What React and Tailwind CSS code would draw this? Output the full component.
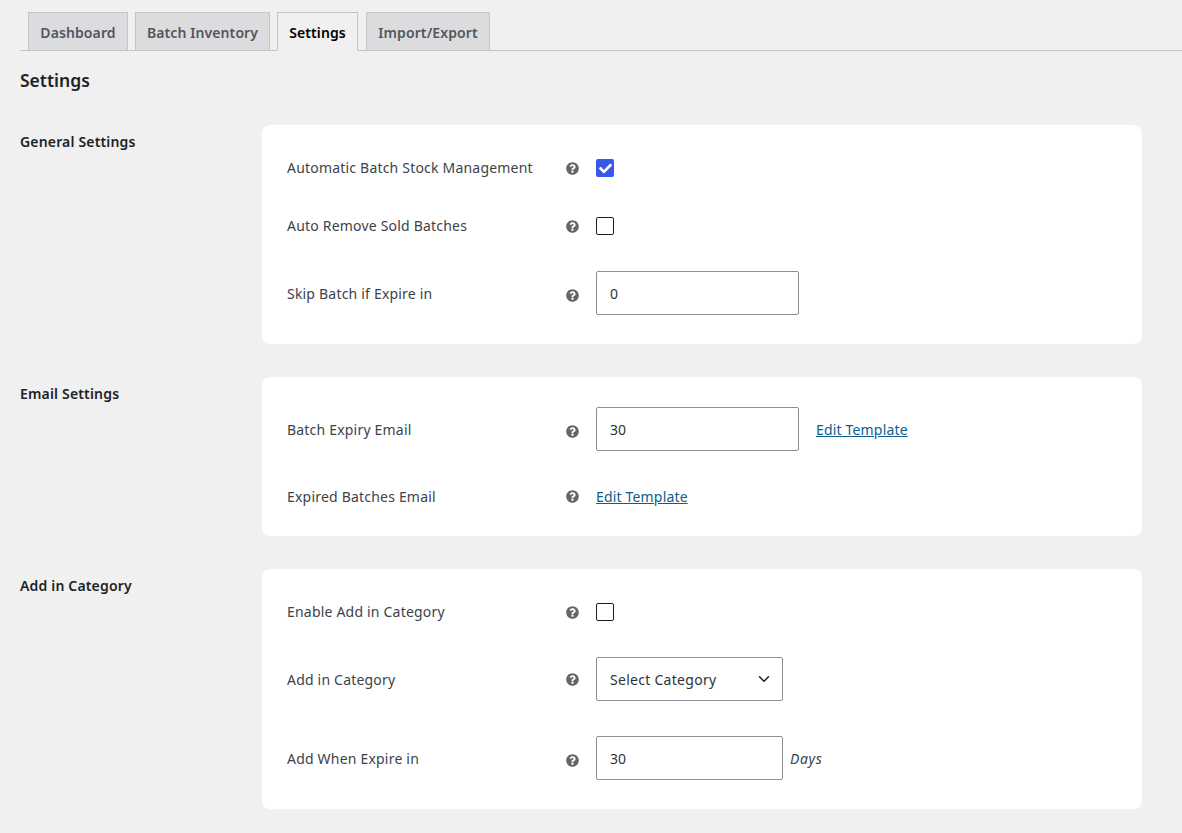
import { FaQuestionCircle, FaCheck } from 'react-icons/fa';
import { ChevronDown } from 'lucide-react';

const tabs = ['Dashboard', 'Batch Inventory', 'Settings', 'Import/Export'];
const tabWidths = {
  Dashboard: 'w-[100px]',
  'Batch Inventory': 'w-[135px]',
  Settings: 'w-[81px]',
  'Import/Export': 'w-[124px] ml-px',
};

function Row({ label, height, iconClass = '', labelClass = 'pb-px', children }) {
  return (
    <div className={`flex items-center ${height}`}>
      <label className={`w-[279px] text-[14px] tracking-[0.2px] text-[#3c434a] ${labelClass}`}>{label}</label>
      <span className={`w-[30px] text-[#666] ${iconClass}`}>
        <FaQuestionCircle className="w-[13px] h-[13px]" />
      </span>
      <div className="flex items-center">{children}</div>
    </div>
  );
}

function Checkbox({ checked }) {
  return checked ? (
    <span className="w-[18px] h-[18px] rounded-[2px] bg-[#3858e9] flex items-center justify-center text-white">
      <FaCheck className="w-[13px] h-[13px]" />
    </span>
  ) : (
    <span className="w-[18px] h-[18px] rounded-[2px] border border-[#1e1e1e] bg-white" />
  );
}

function TextInput({ value, width }) {
  return (
    <div className={`${width} h-[44px] border border-[#8c8f94] rounded-[2px] bg-white flex items-center px-[13px] text-[14px] text-[#2c3338]`}>
      {value}
    </div>
  );
}

function EditLink({ className = '' }) {
  return <a href="#" className={`text-[14px] tracking-[0.17px] text-[#0b5e8e] underline ${className}`}>Edit Template</a>;
}

function Section({ title, cardClass, children }) {
  return (
    <section className="flex">
      <h2 className="w-[242px] pt-[7px] text-[14px] leading-[20px] tracking-[0.17px] font-semibold text-[#1d2327]">{title}</h2>
      <div className={`w-[880px] bg-white rounded-[8px] px-[25px] ${cardClass}`}>{children}</div>
    </section>
  );
}

export default function App() {
  return (
    <div className="min-h-[833px] bg-[#f0f0f1] pl-5 font-['Noto_Sans','Open_Sans',sans-serif]">
      <nav className="flex pt-3 pl-2 gap-[7px] h-[51px] border-b border-[#c3c4c7]">
        {tabs.map((tab) => (
          <a
            key={tab}
            className={`${tabWidths[tab]} h-[39px] flex items-center justify-center pt-px border border-[#c3c4c7] text-[14px] tracking-[0.1px] font-semibold ${
              tab === 'Settings' ? 'bg-[#f0f0f1] border-b-[#f0f0f1] text-black' : 'bg-[#dcdcde] text-[#50575e]'
            }`}
          >
            {tab}
          </a>
        ))}
      </nav>
      <h1 className="mt-[16px] mb-[32px] text-[17.5px] leading-[26px] font-semibold text-[#1d2327]">Settings</h1>

      <div className="flex flex-col gap-[33px]">
        <Section title="General Settings" cardClass="pt-[14px] h-[219px]">
          <Row label="Automatic Batch Stock Management" height="h-[58px]"><Checkbox checked /></Row>
          <Row label="Auto Remove Sold Batches" height="h-[58px]"><Checkbox /></Row>
          <Row label="Skip Batch if Expire in" height="h-[76px]" labelClass="" iconClass="pt-[5px]"><TextInput value="0" width="w-[203px]" /></Row>
        </Section>

        <Section title="Email Settings" cardClass="pt-[14px] h-[159px]">
          <Row label="Batch Expiry Email" height="h-[76px]" labelClass="" iconClass="pt-[5px]">
            <TextInput value="30" width="w-[203px]" />
            <EditLink className="ml-[17px]" />
          </Row>
          <Row label="Expired Batches Email" height="h-[59px]"><EditLink /></Row>
        </Section>

        <Section title="Add in Category" cardClass="pt-[14px] h-[240px]">
          <Row label="Enable Add in Category" height="h-[58px]"><Checkbox /></Row>
          <Row label="Add in Category" height="h-[76px]" labelClass="">
            <div className="w-[187px] h-[44px] border border-[#8c8f94] rounded-[2px] bg-white flex items-center justify-between pl-[13px] pr-[9px] text-[14px] tracking-[0.28px] text-[#2c3338]">
              Select Category
              <ChevronDown className="w-[18px] h-[18px] text-[#1e1e1e]" strokeWidth={2} />
            </div>
          </Row>
          <Row label="Add When Expire in" height="h-[76px] mt-[3px]" labelClass="" iconClass="pt-[5px]">
            <TextInput value="30" width="w-[187px]" />
            <em className="ml-[7px] text-[14px] tracking-[0.6px] text-[#3c434a]">Days</em>
          </Row>
        </Section>
      </div>
    </div>
  );
}
